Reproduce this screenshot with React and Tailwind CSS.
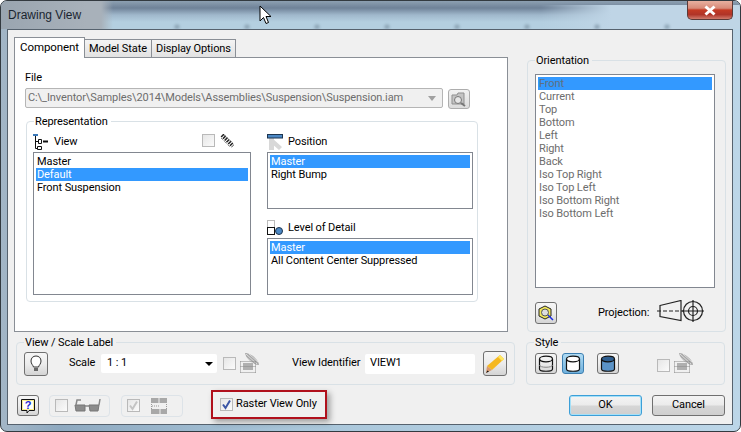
import React from "react";

function Group({ label, className, children }) {
  return (
    <div className={"relative rounded-[4px] border border-[#d9e1e6] " + className}>
      <span className="absolute left-[7px] top-[-7px] bg-[#f0f0f0] pl-px pr-[3px] leading-[14px]">{label}</span>
      {children}
    </div>
  );
}

function ListBox({ items, selected, className, muted }) {
  return (
    <div className={"border border-[#828790] bg-white p-[2px] " + className}>
      {items.map((t) => (
        <div
          key={t}
          className={
            "h-[13px] pl-px leading-[13px] " +
            (t === selected ? (muted ? "bg-[#3399ff] text-[#5f6f80]" : "bg-[#3399ff] text-white") : muted ? "text-[#6d6d6d]" : "text-black")
          }
        >
          {t}
        </div>
      ))}
    </div>
  );
}

function Check({ checked, className = "" }) {
  return (
    <span className={"flex h-[13px] w-[13px] shrink-0 items-center justify-center border border-[#b9b9b9] bg-[linear-gradient(135deg,#e6e6e6,#fbfbfb)] " + className}>
      {checked && (
        <svg width="11" height="11" viewBox="0 0 11 11">
          <path d="M2 5.5 L4.5 9 L9 1.5" fill="none" stroke={checked === "gray" ? "#c4c4c4" : "#3b55a5"} strokeWidth="2" />
        </svg>
      )}
    </span>
  );
}

function IconButton({ className = "", active, children }) {
  return (
    <div
      className={
        "flex shrink-0 items-center justify-center rounded-[3px] border " +
        (active
          ? "border-[#3c7fb1] bg-[linear-gradient(#b0dcf5,#6fb0dc)] "
          : "border-[#707070] bg-[linear-gradient(#f6f6f6_0%,#ececec_50%,#d4d4d4_100%)] ") +
        className
      }
    >
      {children}
    </div>
  );
}

function Wing({ color = "#a8a8a8" }) {
  return (
    <svg width="20" height="21" viewBox="0 0 20 21" className="shrink-0">
      <path d="M5 1 C11 1 19 8 19 13 C13 13 6 7 5 1Z" fill={color} />
      <path d="M6 2 L17 12 M9 2 L18 10 M6 5 L14 12" stroke="#e8e8e8" strokeWidth="0.8" />
      <rect x="3" y="11" width="10" height="7" fill="#b0b0b0" />
      <path d="M0.5 9.5H15.5M0.5 20.5H15.5M0.5 9.5V20.5M15.5 9.5V20.5M0.5 14.5H15.5" stroke="#8a8a8a" strokeDasharray="1 1" fill="none" />
    </svg>
  );
}

function Cylinder({ mode }) {
  return (
    <svg width="16" height="18" viewBox="0 0 16 18">
      {mode === "shaded" && <path d="M1.5 4V14C1.5 17 14.5 17 14.5 14V4Z" fill="#5b93c7" />}
      {mode === "white" && <path d="M1.5 4V14C1.5 17 14.5 17 14.5 14V4Z" fill="#fff" />}
      <ellipse cx="8" cy="4" rx="6.5" ry="2.8" fill={mode === "shaded" ? "#2f5f90" : mode === "white" ? "#fff" : "none"} stroke="#111" strokeWidth="1.2" />
      <path d="M1.5 4V14C1.5 17 14.5 17 14.5 14V4" fill="none" stroke="#111" strokeWidth="1.2" />
      {mode === "hidden" && <path d="M1.5 10C1.5 13 14.5 13 14.5 10" fill="none" stroke="#888" strokeWidth="1" />}
    </svg>
  );
}

const dialogBtn = "flex h-[21px] w-[73px] items-center justify-center rounded-[3px] border bg-[linear-gradient(#f4f4f4_0%,#ebebeb_48%,#d6d6d6_52%,#cfcfcf_100%)]";

export default function App() {
  return (
    <div className="relative h-[432px] w-[741px] overflow-hidden bg-white text-[11px] tracking-[-0.1px] text-black [font-family:Roboto,'Liberation_Sans',sans-serif]">
      <div className="flex h-[432px] w-[741px] flex-col rounded-[7px] border border-[#333a40] bg-[linear-gradient(90deg,#a3b6c6_0px,#8ea9c0_60px,#a9c6da_300px,#bcd6e8_100%)]">
        {/* title bar */}
        <div className="relative flex h-[28px] shrink-0 items-start justify-between overflow-hidden rounded-t-[6px] bg-[linear-gradient(90deg,#9aa5b0_0px,#a8b1ba_85px,#a8b1ba_100px,#b4cfe000_112px),linear-gradient(180deg,#8da0b2_0px,#6f8298_7px,#a0b8cc_14px,#b4cfe0_21px),linear-gradient(90deg,#b4cfe0,#b4cfe0)]">
          <div className="absolute left-[540px] top-[4px] h-[24px] w-[200px] bg-[linear-gradient(90deg,#bfd5e600_0px,#bfd5e6ff_70px)]" />
          <div className="absolute left-[140px] top-[20px] h-[8px] w-[540px] bg-[radial-gradient(circle_at_36px_6px,#8299ab_0px,#8299ab00_4px)] bg-[length:70px_8px] bg-repeat-x blur-[1px]" />
          <span className="relative ml-[7px] mt-[6px] text-[12px] leading-[16px] tracking-normal text-[#1a2530] [font-family:'Liberation_Sans',sans-serif]">Drawing View</span>
          <div className="relative mr-[7px] flex h-[19px] w-[46px] items-center justify-center rounded-b-[5px] border border-t-0 border-[#5a3a38] bg-[linear-gradient(#e8b0a0_0%,#d88a78_40%,#c43a24_50%,#b03428_75%,#d07a6c_100%)]">
            <svg width="14" height="11" viewBox="0 0 14 11">
              <path d="M2.5 1.5 L11.5 9.5 M11.5 1.5 L2.5 9.5" stroke="#fff" strokeWidth="3" />
            </svg>
          </div>
        </div>

        <div className="flex min-h-0 flex-1">
          <div className="w-[6px] shrink-0" />
          {/* client */}
          <div className="flex h-[396px] w-[726px] flex-col border border-[#56626e] bg-[#f0f0f0] pl-[6px]">
            {/* upper */}
            <div className="flex h-[302px] shrink-0">
              <div className="flex w-[494px] shrink-0 flex-col pt-[7px]">
                <div className="z-10 flex h-[20px] items-end">
                  <div className="mb-[-1px] flex h-[21px] w-[71px] items-center justify-center border border-b-0 border-[#8a8f96] bg-white pb-px text-[11.5px]">Component</div>
                  <div className="flex h-[18px] w-[67px] items-center justify-center border border-b-0 border-l-0 border-[#8a8f96] bg-[linear-gradient(#f4f4f4,#e2e2e2)] pt-[2px]">Model State</div>
                  <div className="flex h-[18px] w-[84px] items-center justify-center border border-b-0 border-l-0 border-[#8a8f96] bg-[linear-gradient(#f4f4f4,#e2e2e2)] pt-[2px]">Display Options</div>
                </div>
                <div className="flex h-[275px] flex-col border border-[#8a8f96] bg-white px-[10px] pt-[13px]">
                  <div className="h-[14px] leading-[14px]">File</div>
                  <div className="mt-[3px] flex items-start">
                    <div className="flex h-[20px] w-[418px] items-center justify-between rounded-[2px] border border-[#b5b5b5] bg-[#f0f0f0] pl-[2px] pr-[6px] text-[#6d6d6d]">
                      <span>C:\_Inventor\Samples\2014\Models\Assemblies\Suspension\Suspension.iam</span>
                      <svg width="8" height="5" viewBox="0 0 8 5"><path d="M0 0H8L4 5Z" fill="#a0a0a0" /></svg>
                    </div>
                    <div className="ml-[5px] mt-px flex h-[20px] w-[22px] items-center justify-center rounded-[3px] border border-[#adadad] bg-[linear-gradient(#f2f2f2,#dcdcdc)]">
                      <svg width="16" height="15" viewBox="0 0 16 15">
                        <path d="M1 3H6L7 1H13V12H1Z" fill="#c4c4c4" stroke="#8f8f8f" />
                        <circle cx="7" cy="8" r="3.5" fill="#e6e6e6" stroke="#777" />
                        <path d="M10 11L14 14" stroke="#777" strokeWidth="2" />
                      </svg>
                    </div>
                  </div>
                  <div className="ml-px mt-[12px] h-[181px] w-[452px]">
                    <div className="relative h-full rounded-[4px] border border-[#d9e1e6] pl-[6px] pt-[12px]">
                      <span className="absolute left-[7px] top-[-7px] bg-white pl-px pr-[3px] leading-[14px]">Representation</span>
                      <div className="flex gap-[16px]">
                        <div className="w-[218px] shrink-0">
                          <div className="flex h-[18px] items-start">
                            <svg width="16" height="16" viewBox="0 0 16 16" className="shrink-0">
                              <rect x="0" y="0" width="5" height="2" fill="#3b78b8" />
                              <path d="M2.5 2V14.5H4M2.5 7.5H5" stroke="#111" fill="none" />
                              <path d="M5.5 5.5H8.5V9.5H5.5ZM4.5 12.5H8.5V15.5H4.5Z" stroke="#111" fill="#fff" />
                              <path d="M10 7.5H15" stroke="#111" strokeWidth="2" />
                            </svg>
                            <span className="ml-[5px] leading-[16px]">View</span>
                            <Check className="ml-auto" />
                            <svg width="14" height="14" viewBox="0 0 14 14" className="ml-[5px] mr-[17px]">
                              <path d="M2 1 L13 12" stroke="#222" strokeWidth="4" strokeDasharray="1.5 1" />
                              <path d="M4 1 L13 9 M1 4 L10 13" stroke="#666" strokeWidth="1" strokeDasharray="1 1" />
                            </svg>
                          </div>
                          <ListBox className="h-[143px]" items={["Master", "Default", "Front Suspension"]} selected="Default" />
                        </div>
                        <div className="w-[206px] shrink-0">
                          <div className="flex h-[18px] items-start">
                            <svg width="16" height="16" viewBox="0 0 16 16" className="shrink-0">
                              <path d="M2 4H7V16H2ZM5 4L15 13L12 16L4 9Z" fill="#d8d8d8" />
                              <rect x="0.5" y="0.5" width="15" height="3.5" fill="#4c88c4" stroke="#1d3550" />
                            </svg>
                            <span className="ml-[5px] leading-[16px]">Position</span>
                          </div>
                          <ListBox className="h-[57px]" items={["Master", "Right Bump"]} selected="Master" />
                          <div className="mt-[11px] flex h-[18px] items-start">
                            <svg width="16" height="16" viewBox="0 0 16 16" className="shrink-0">
                              <rect x="0.5" y="0.5" width="7" height="7" fill="#fff" stroke="#bbb" />
                              <rect x="0.5" y="7.5" width="7" height="7" fill="#fff" stroke="#111" />
                              <circle cx="12" cy="11" r="3.5" fill="#4c88c4" stroke="#1d3550" />
                            </svg>
                            <span className="ml-[5px] leading-[16px]">Level of Detail</span>
                          </div>
                          <ListBox className="h-[57px]" items={["Master", "All Content Center Suppressed"]} selected="Master" />
                        </div>
                      </div>
                    </div>
                  </div>
                </div>
              </div>
              <div className="ml-[19px] pt-[30px]">
                <Group label="Orientation" className="flex h-[272px] w-[199px] flex-col px-[7px] pt-[13px]">
                  <ListBox
                    className="h-[214px] w-[180px]"
                    muted
                    items={["Front", "Current", "Top", "Bottom", "Left", "Right", "Back", "Iso Top Right", "Iso Top Left", "Iso Bottom Right", "Iso Bottom Left"]}
                    selected="Front"
                  />
                  <div className="mt-[14px] flex items-center">
                    <IconButton className="h-[22px] w-[22px]">
                      <svg width="16" height="16" viewBox="0 0 16 16">
                        <path d="M7 1L13 4V11L7 14L1 11V4Z" fill="#f2e85a" stroke="#222" />
                        <circle cx="7" cy="7.5" r="3.5" fill="#ddd" stroke="#555" />
                        <path d="M10 10L15 15" stroke="#1a2be0" strokeWidth="1.5" />
                      </svg>
                    </IconButton>
                    <span className="ml-[41px] w-[51px] whitespace-nowrap">Projection:</span>
                    <svg width="48" height="22" viewBox="0 0 48 22" className="ml-[8px] mt-[-4px] shrink-0">
                      <path d="M3 5.5L24 0.5V20.5L3 16.5Z" fill="none" stroke="#222" strokeWidth="1.2" />
                      <path d="M0 11H27" stroke="#222" strokeDasharray="4 2" strokeWidth="1.2" />
                      <circle cx="36" cy="11" r="9.5" fill="none" stroke="#222" strokeWidth="1.2" />
                      <circle cx="36" cy="11" r="4.5" fill="none" stroke="#222" strokeWidth="1.2" />
                      <path d="M36 0V22M25 11H47" stroke="#222" strokeWidth="1.2" />
                    </svg>
                  </div>
                </Group>
              </div>
            </div>
            {/* middle */}
            <div className="mt-[10px] flex shrink-0">
              <Group label="View / Scale Label" className="ml-[2px] flex h-[43px] w-[499px] items-center pl-[7px]">
                <IconButton className="h-[24px] w-[24px]">
                  <svg width="12" height="17" viewBox="0 0 12 17">
                    <path d="M6 1C9 1 11 3 11 6C11 9 9 10 8.5 12H3.5C3 10 1 9 1 6C1 3 3 1 6 1Z" fill="#fff" stroke="#333" />
                    <path d="M4 13H8V16H4Z" fill="#666" />
                  </svg>
                </IconButton>
                <span className="ml-[21px] w-[32px]">Scale</span>
                <div className="flex h-[19px] w-[116px] items-center justify-between rounded-[2px] bg-white pl-[6px] pr-[4px]">
                  <span>1 : 1</span>
                  <svg width="8" height="4" viewBox="0 0 8 4"><path d="M0 0H8L4 4Z" fill="#000" /></svg>
                </div>
                <Check className="ml-[6px]" />
                <span className="ml-[4px] mt-[-3px]"><Wing /></span>
                <span className="ml-[32px] w-[73px] whitespace-nowrap">View Identifier</span>
                <div className="flex h-[20px] w-[110px] items-center rounded-[2px] bg-white pl-[5px]">VIEW1</div>
                <IconButton className="ml-[8px] h-[25px] w-[24px]">
                  <svg width="20" height="20" viewBox="0 0 20 20">
                    <path d="M15 1L19 5L7 16L2 12Z" fill="#f5b820" />
                    <path d="M15 1L19 5L17 7L13 3Z" fill="#ffe860" />
                    <path d="M2 12L7 16L1 19Z" fill="#d89a70" />
                    <path d="M2.5 16.5L4 17.5L1 19Z" fill="#111" />
                  </svg>
                </IconButton>
              </Group>
              <Group label="Style" className="ml-[11px] flex h-[43px] w-[199px] items-center pl-[8px]">
                <IconButton className="h-[21px] w-[22px]"><Cylinder mode="hidden" /></IconButton>
                <IconButton active className="ml-[5px] h-[21px] w-[22px]"><Cylinder mode="white" /></IconButton>
                <IconButton className="ml-[13px] h-[21px] w-[22px]"><Cylinder mode="shaded" /></IconButton>
                <Check className="ml-[38px] mt-[3px]" />
                <span className="ml-[4px] mt-[-3px]"><Wing /></span>
              </Group>
            </div>
            {/* bottom */}
            <div className="mt-[5px] flex h-[29px] shrink-0 items-center">
              <IconButton className="ml-[3px] mt-[2px] h-[21px] w-[22px]">
                <svg width="16" height="16" viewBox="0 0 16 16">
                  <path d="M1.5 1.5H14.5V12.5H9L7 15V12.5H1.5Z" fill="#fff" stroke="#111" />
                  <path d="M2.5 2.5H13.5V11.5H2.5Z" fill="none" stroke="#f4e020" strokeDasharray="1 1" />
                  <text x="8" y="11" textAnchor="middle" fontSize="11" fontWeight="bold" fill="#1a2bd0" fontFamily="Liberation Sans">?</text>
                </svg>
              </IconButton>
              <div className="ml-[10px] mt-[2px] flex h-[22px] w-[61px] items-center rounded-[4px] border border-[#dde3e8] pl-[5px]">
                <Check />
                <svg width="28" height="15" viewBox="0 0 28 15" className="ml-[6px]">
                  <path d="M1 7H11V13H2ZM15 7H25L24 13H16Z" fill="#8c8c8c" stroke="#777" />
                  <path d="M11 8H15M2 7L3 2H7M25 7L26 1" stroke="#888" fill="none" strokeWidth="1.5" />
                </svg>
              </div>
              <div className="ml-[11px] mt-[2px] flex h-[22px] w-[62px] items-center rounded-[4px] border border-[#dde3e8] pl-[5px]">
                <Check checked="gray" />
                <svg width="17" height="16" viewBox="0 0 17 16" className="ml-[11px]">
                  <path d="M0 0H16V5H0ZM0 11H16V16H0Z" fill="#a8a8a8" />
                  <path d="M8 0V5M9 11V16" stroke="#f0f0f0" />
                  <path d="M0.5 6V11M15.5 6V11M1 8H9" stroke="#999" strokeDasharray="1 1" />
                </svg>
              </div>
              <div className="ml-[28px] flex h-[29px] w-[116px] items-center border-2 border-[#b0101c] pl-[7px] shadow-[3px_3px_6px_rgba(0,0,0,0.35)]">
                <Check checked="blue" />
                <span className="ml-[3px] whitespace-nowrap">Raster View Only</span>
              </div>
              <div className={dialogBtn + " ml-[242px] mt-[2px] border-[#3c9fd8] shadow-[inset_0_0_0_1px_#a5e0f8]"}>OK</div>
              <div className={dialogBtn + " ml-[10px] mt-[2px] border-[#707070]"}>Cancel</div>
            </div>
          </div>
          <div className="w-[7px] shrink-0" />
        </div>
      </div>
      {/* mouse pointer */}
      <svg width="13" height="20" viewBox="0 0 13 20" className="absolute left-[259px] top-[5px]">
        <path d="M1 1V16L4.5 12.5L7 18.5L9.5 17.5L7 11.5H12Z" fill="#fff" stroke="#000" />
      </svg>
    </div>
  );
}
